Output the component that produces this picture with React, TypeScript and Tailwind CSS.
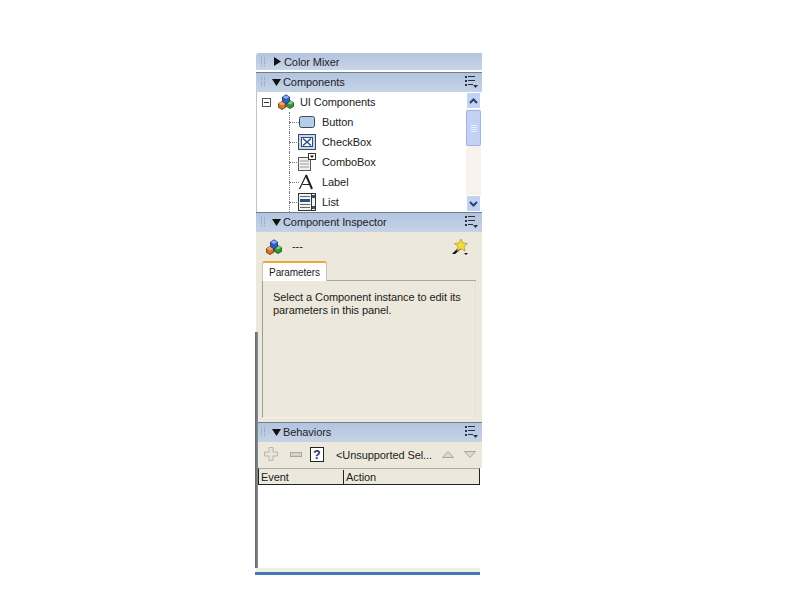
import React from "react";

const font = { fontFamily: '"Liberation Sans", "Noto Sans", sans-serif' };

function Grip() {
  return (
    <svg width="6" height="10" viewBox="0 0 6 10" className="shrink-0">
      {[0, 2, 4, 6, 8].map((y) => (
        <g key={y} fill="#8f9db3">
          <rect x="0" y={y} width="1" height="1" />
          <rect x="3" y={y} width="1" height="1" />
        </g>
      ))}
    </svg>
  );
}

function MenuIcon() {
  return (
    <svg width="13" height="12" viewBox="0 0 13 12" className="shrink-0">
      <g fill="#27313f">
        <rect x="0" y="0" width="2" height="2" />
        <rect x="0" y="4" width="2" height="2" />
        <rect x="0" y="8" width="2" height="2" />
        <rect x="3" y="0" width="7" height="1" />
        <rect x="3" y="4" width="7" height="1" />
        <rect x="3" y="8" width="5" height="1" />
        <path d="M8 9h5l-2.500 3z" />
      </g>
    </svg>
  );
}

function Header({ title }: { title: string }) {
  return (
    <div className="flex h-[20px] items-center border-t border-[#6f7f90] bg-gradient-to-b from-[#b3c4de] to-[#c6d3e6] pb-[1px] pl-[5px] pr-[4px]">
      <Grip />
      <svg width="9" height="9" viewBox="0 0 9 9" className="ml-[5px] shrink-0">
        <path d="M0 1h9L4.500 8z" fill="#111" />
      </svg>
      <span className="ml-[2px] text-[11px] leading-none text-[#1c222b]">{title}</span>
      <div className="flex-1" />
      <MenuIcon />
    </div>
  );
}

function Cubes() {
  return (
    <svg width="16" height="16" viewBox="0 0 16 16" className="shrink-0">
      <path d="M.5 9.500L4 7.500l3.500 2v4l-3.500 2-3.500-2z" fill="#d9702a" stroke="#5e3110" strokeWidth="0.8" />
      <path d="M.5 9.500L4 11.500l3.500-2L4 7.500z" fill="#f2a868" />
      <path d="M8.500 8.500L12 6.500l3.500 2v4l-3.500 2-3.500-2z" fill="#2f9a35" stroke="#174d17" strokeWidth="0.8" />
      <path d="M8.500 8.500L12 10.500l3.500-2L12 6.500z" fill="#7fd07a" />
      <path d="M4.500 3L8 .8 11.500 3v4.500L8 9.800 4.500 7.500z" fill="#2f5cc4" stroke="#16306f" strokeWidth="0.8" />
      <path d="M4.800 3L8 5l3.200-2L8 1.200z" fill="#8eb0f0" />
    </svg>
  );
}

function ButtonIcon() {
  return (
    <svg width="18" height="14" viewBox="0 0 18 14">
      <rect x="1.500" y="1.500" width="15" height="11" rx="2" fill="#b5cde6" stroke="#3d4a5c" />
    </svg>
  );
}
function CheckIcon() {
  return (
    <svg width="18" height="16" viewBox="0 0 18 16">
      <rect x="0.500" y="0.500" width="17" height="15" fill="#c9d9ec" stroke="#3d4a5c" />
      <rect x="3.500" y="3.500" width="11" height="9" fill="#fff" stroke="#2c4f86" />
      <path d="M5 4.500l8 7M13 4.500l-8 7" stroke="#2c4f86" strokeWidth="1.500" />
    </svg>
  );
}
function ComboIcon() {
  return (
    <svg width="18" height="18" viewBox="0 0 18 18">
      <rect x="0.500" y="4.500" width="12" height="13" fill="#f1f1ee" stroke="#555" />
      <path d="M2 8h9M2 11h9M2 14h9" stroke="#999" />
      <rect x="10.500" y="0.500" width="7" height="6" fill="#fff" stroke="#333" />
      <path d="M12 2.500h4l-2 2.500z" fill="#111" />
    </svg>
  );
}
function LabelIcon() {
  return (
    <svg width="18" height="16" viewBox="0 0 18 16">
      <path d="M1.500 15L8 1.500" fill="none" stroke="#222" strokeWidth="1.200" />
      <path d="M8 1l6 14" fill="none" stroke="#222" strokeWidth="2" />
      <path d="M4.500 10.500h8" fill="none" stroke="#222" strokeWidth="1" />
    </svg>
  );
}
function ListIcon() {
  return (
    <svg width="18" height="18" viewBox="0 0 18 18">
      <rect x="0.500" y="0.500" width="17" height="17" fill="#f3f3f0" stroke="#333" />
      <path d="M13.500 0.500v17" stroke="#333" />
      <rect x="2" y="6" width="10" height="3" fill="#2c4f86" />
      <path d="M2 3.500h10M2 11.500h10M2 14.500h10" stroke="#666" />
      <rect x="14" y="2" width="3" height="3" fill="#2c4f86" />
      <rect x="14" y="13" width="3" height="3" fill="#2c4f86" />
    </svg>
  );
}

function TreeRow({ icon, label }: { icon: React.ReactNode; label: string }) {
  return (
    <div className="flex h-[20px] items-center">
      <div className="relative h-[20px] w-[41px] shrink-0">
        <div className="absolute left-[32px] top-0 h-[20px] w-0 border-l border-dotted border-[#777]" />
        <div className="absolute left-[32px] top-[10px] h-0 w-[10px] border-t border-dotted border-[#777]" />
      </div>
      <div className="flex w-[18px] shrink-0 items-center justify-center">{icon}</div>
      <span className="ml-[6px] text-[11px] leading-none text-[#222]">{label}</span>
    </div>
  );
}

function ScrollArrow({ up }: { up?: boolean }) {
  return (
    <div className="flex h-[17px] items-center justify-center rounded-[2px] border border-white bg-[#c3d1f5]">
      <svg width="9" height="6" viewBox="0 0 9 6">
        <path d={up ? "M1 5l3.500-3.500L8 5" : "M1 1l3.500 3.500L8 1"} fill="none" stroke="#2b3f70" strokeWidth="2" />
      </svg>
    </div>
  );
}

export default function App() {
  return (
    <div className="h-[600px] w-[800px] bg-white tracking-[-0.08px]" style={font}>
      <div className="relative ml-[256px] w-[226px] pt-[53px]">
        {/* Color Mixer */}
        <div className="h-[19px]">
          <div className="flex h-[17px] items-center rounded-tl-[3px] bg-gradient-to-b from-[#b3c4de] to-[#c9d5e7] pl-[5px]">
            <Grip />
            <svg width="9" height="9" viewBox="0 0 9 9" className="ml-[6px] shrink-0">
              <path d="M1 0l7 4.500L1 9z" fill="#111" />
            </svg>
            <span className="ml-[2px] pt-[1px] text-[11px] leading-none text-[#1c222b]">Color Mixer</span>
          </div>
        </div>

        <Header title="Components" />
        {/* Tree */}
        <div className="flex h-[120px] border-l border-[#c4c4c4] bg-white">
          <div className="flex-1 overflow-hidden">
            <div className="flex h-[20px] items-center pl-[5px]">
              <div className="flex h-[9px] w-[9px] items-center justify-center border border-[#555]">
                <div className="h-px w-[5px] bg-[#333]" />
              </div>
              <div className="ml-[7px]"><Cubes /></div>
              <span className="ml-[6px] text-[11px] leading-none text-[#222]">UI Components</span>
            </div>
            <TreeRow icon={<ButtonIcon />} label="Button" />
            <TreeRow icon={<CheckIcon />} label="CheckBox" />
            <TreeRow icon={<ComboIcon />} label="ComboBox" />
            <TreeRow icon={<LabelIcon />} label="Label" />
            <TreeRow icon={<ListIcon />} label="List" />
          </div>
          <div className="mr-px flex w-[15px] flex-col bg-[#f7f3ec]">
            <ScrollArrow up />
            <div className="mt-px flex h-[36px] flex-col items-center justify-center gap-px rounded-[2px] border border-[#9db4ea] bg-[#c3d1f5]">
              <div className="h-px w-[6px] bg-[#eef2fd]" />
              <div className="h-px w-[6px] bg-[#eef2fd]" />
              <div className="h-px w-[6px] bg-[#eef2fd]" />
              <div className="h-px w-[6px] bg-[#eef2fd]" />
            </div>
            <div className="flex-1" />
            <ScrollArrow />
          </div>
        </div>

        <Header title="Component Inspector" />
        {/* Inspector */}
        <div className="flex h-[190px] flex-col bg-[#ece9dc] pl-[6px] pr-[6px]">
          <div className="flex h-[29px] shrink-0 items-center pl-[4px] pr-[7px]">
            <Cubes />
            <span className="ml-[10px] text-[11px] leading-none text-[#222]">---</span>
            <div className="flex-1" />
            <svg width="18" height="17" viewBox="0 0 18 17">
              <path d="M1 16l7-7 2 2-6 5z" fill="#111" />
              <path d="M10 1l2 4 4.500 .5-3.500 3 1 4.500-4-2.300-4 2.300 1-4.500-3.500-3L8 5z" fill="#f2dd3d" stroke="#a89426" strokeWidth="0.7" />
              <path d="M13 15h4l-2 2z" fill="#111" />
            </svg>
          </div>
          <div className="flex h-[20px] shrink-0 items-end">
            <div className="flex h-[20px] w-[65px] items-center justify-center rounded-t-[3px] border-x border-t-2 border-x-[#c9c7b8] border-t-[#eda83b] bg-white pt-[1px] text-[10px] leading-none text-[#222]">
              Parameters
            </div>
            <div className="h-px flex-1 bg-[#a9a89a]" />
          </div>
          <div className="flex-1 border-b border-l border-r border-b-[#f4f2e8] border-l-[#9c9c90] border-r-[#e2e0d2] pl-[10px] pt-[10px] text-[11px] leading-[13px] text-[#222]">
            Select a Component instance to edit its
            <br />
            parameters in this panel.
          </div>
          <div className="h-[4px] shrink-0" />
        </div>

        <Header title="Behaviors" />
        {/* Behaviors toolbar */}
        <div className="flex h-[26px] items-center bg-[#ece9dc] pb-[1px] pl-[8px]">
          <svg width="15" height="15" viewBox="0 0 15 15">
            <path d="M5 .5h4v4.500h4.500v4H9v4.500H5V9H.5V5H5z" fill="#e8e6da" stroke="#b8b6a8" />
          </svg>
          <div className="ml-[11px] h-[5px] w-[12px] border border-[#a9a89a] bg-[#d4d2c5]" />
          <div className="ml-[8px] flex h-[15px] w-[14px] items-center justify-center border border-[#222] bg-white text-[12px] font-bold leading-none text-[#1d2f66]">?</div>
          <span className="ml-[12px] pt-[1px] text-[11px] leading-none text-[#222]">&lt;Unsupported Sel...</span>
          <svg width="12" height="7" viewBox="0 0 12 7" className="ml-[10px]">
            <path d="M6 .5l5.500 6H.5z" fill="#dcdacd" stroke="#a9a89a" />
          </svg>
          <svg width="12" height="7" viewBox="0 0 12 7" className="ml-[10px]">
            <path d="M.5 .5h11L6 6.500z" fill="#dcdacd" stroke="#a9a89a" />
          </svg>
        </div>
        {/* Table */}
        <div className="ml-[2px] mr-[2px] flex h-[17px] border border-x-[#222] border-b-[#222] border-t-[#aaa] bg-[#ece9dc] pt-[1px] text-[11px] leading-none text-[#222]">
          <div className="flex w-[85px] items-center border-r border-[#222] pl-[2px]">Event</div>
          <div className="flex flex-1 items-center pl-[2px]">Action</div>
        </div>
        <div className="h-[83px] bg-white" />
        <div className="mr-[2px] h-[4px] bg-[#f1efe4]" />
        <div className="mr-[2px] -ml-[1px] h-[3px] bg-[#3f78b5]" />
        {/* window edge lying over the panel's left side */}
        <div className="absolute left-[-1px] top-[332px] h-[236px] w-[3px] bg-gradient-to-r from-[#5d6670] to-[#8a8f94]" />
      </div>
    </div>
  );
}
